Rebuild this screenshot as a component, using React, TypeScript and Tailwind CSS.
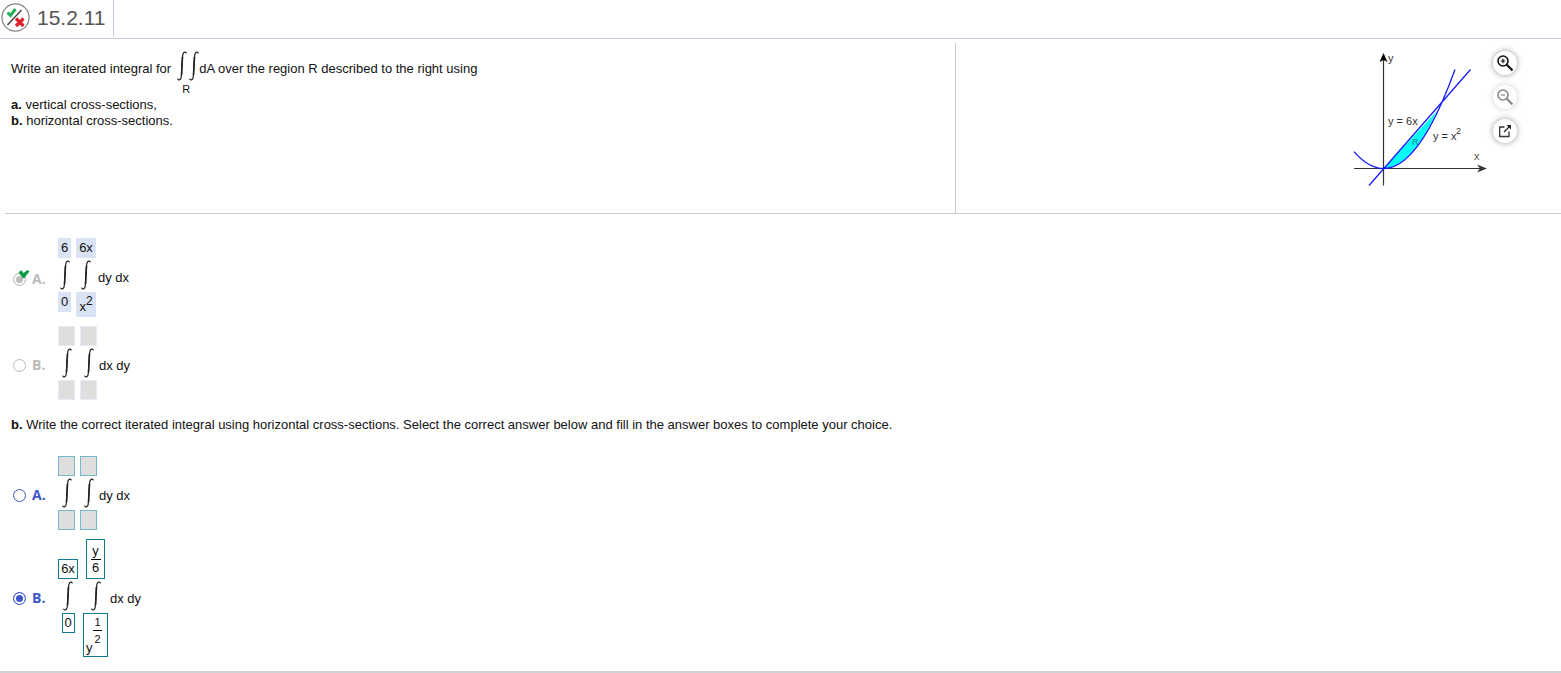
import { useState, type ReactNode } from "react";
import { clsx } from "clsx";

function Integral() {
  return (
    <svg width="10" height="30" viewBox="0 0 10 30" aria-hidden="true">
      <path
        d="M9.2 1.9C8.6 0.6 6.7 0.6 6 3C5.2 6 5.2 10 4.9 15C4.7 20 4.7 24 4 27C3.3 29.4 1.4 29.4 0.8 28.1"
        fill="none"
        stroke="#222"
        strokeWidth="1.2"
        strokeLinecap="round"
      />
      <path d="M5.5 6L4.5 24" stroke="#222" strokeWidth="1.6" />
    </svg>
  );
}

type Tone = "graded" | "locked" | "empty" | "filled";

const tones: Record<Tone, string> = {
  graded: "border-[#dae3f3] bg-[#dae3f3]",
  locked: "border-[#e6ebf7] bg-[#dedede]",
  empty: "border-[#76b8c9] bg-[#dedede]",
  filled: "border-[#0d7a93] bg-white",
};

interface BoxProps {
  label: string;
  tone: Tone;
  value?: string;
  wide?: boolean;
}

function AnswerBox({ label, tone, value = "", wide }: BoxProps) {
  const width = value === "" ? "w-[17px]" : wide ? "w-5" : "w-[13px]";
  return (
    <input
      type="text"
      aria-label={label}
      defaultValue={value}
      readOnly={tone === "graded" || tone === "locked"}
      className={clsx("h-5 border p-0 pb-[2px] text-center outline-none", width, tones[tone])}
    />
  );
}

interface MathBoxProps {
  label: string;
  tone: Tone;
  className: string;
  children: ReactNode;
}

function MathBox({ label, tone, className, children }: MathBoxProps) {
  return (
    <button type="button" aria-label={label} className={clsx("border", tones[tone], className)}>
      {children}
    </button>
  );
}

interface ChoiceProps {
  name: string;
  letter: string;
  differential: string;
  checked: boolean;
  disabled?: boolean;
  correct?: boolean;
  onSelect?: () => void;
  limits: [ReactNode, ReactNode, ReactNode, ReactNode];
}

function Choice({ name, letter, differential, checked, disabled, correct, onSelect, limits }: ChoiceProps) {
  const [outerTop, outerBottom, innerTop, innerBottom] = limits;
  return (
    <div className="grid w-max grid-cols-[45px_auto_auto_auto] grid-rows-[auto_34px_auto] gap-x-[5px] pl-[3px]">
      <label
        className={clsx(
          "row-start-2 flex items-center gap-[6px] pl-[5px] font-['Open_Sans',sans-serif] text-sm font-bold",
          disabled ? "text-[#bbb]" : "text-[#3d57c9]",
          correct ? "pt-2" : "pt-1"
        )}
      >
        <span className="relative flex">
          <input
            type="radio"
            name={name}
            checked={checked}
            disabled={disabled}
            onChange={onSelect}
            className="size-[13px] appearance-none rounded-full border border-current bg-white checked:bg-current checked:shadow-[inset_0_0_0_2px_white]"
          />
          {correct && (
            <svg className="absolute -top-1 left-[5px]" width="12" height="11" viewBox="0 0 12 11" role="img" aria-label="Correct">
              <path d="M0.5 3.2L3.5 1.2L5.5 4L9.5 1L11.5 2.2L6.2 9.2L4.8 9.2Z" fill="#0a9b46" />
            </svg>
          )}
        </span>
        {letter}.
      </label>
      <div className="col-start-2 row-start-1 flex self-end justify-self-center">{outerTop}</div>
      <div className="col-start-2 row-start-2 self-center justify-self-center"><Integral /></div>
      <div className="col-start-2 row-start-3 flex self-start justify-self-center">{outerBottom}</div>
      <div className="col-start-3 row-start-1 flex self-end justify-self-center">{innerTop}</div>
      <div className="col-start-3 row-start-2 self-center justify-self-center"><Integral /></div>
      <div className="col-start-3 row-start-3 flex self-start justify-self-center">{innerBottom}</div>
      <span className="col-start-4 row-start-2 -ml-[3px] self-center pt-[6px]">{differential}</span>
    </div>
  );
}

function emptyLimits(tone: Tone, part: string): [ReactNode, ReactNode, ReactNode, ReactNode] {
  return [
    <AnswerBox label={`${part} outer upper limit`} tone={tone} />,
    <AnswerBox label={`${part} outer lower limit`} tone={tone} />,
    <AnswerBox label={`${part} inner upper limit`} tone={tone} />,
    <AnswerBox label={`${part} inner lower limit`} tone={tone} />,
  ];
}

function RegionGraph() {
  return (
    <svg width="140" height="140" viewBox="0 0 140 140" role="img" aria-label="Region R between y = 6x and y = x squared">
      <path d="M33.5 118.5L87 61Q61 117 33.5 118.5Z" fill="#00ffff" />
      <path d="M33.5 7V135.5M4 118.5H132" stroke="#333" strokeWidth="1.2" fill="none" />
      <path d="M33.5 3L37.5 12L33.5 10L29.5 12Z" fill="#000" />
      <path d="M137 118.5L127 114.5L130 118.5L127 122.5Z" fill="#333" />
      <path d="M4 101.6Q54.5 159.4 105 19.5M19 135.5L120.5 19.5" stroke="#1a1aff" strokeWidth="1.3" fill="none" />
      <g fill="#333" fontSize="11">
        <text x="38" y="12">y</text>
        <text x="124" y="110" fill="#555">x</text>
        <text x="38" y="75">y = 6x</text>
        <text x="83" y="90">y = x</text>
        <text x="106" y="84" fontSize="9">2</text>
        <text x="62" y="95" fontSize="9" fill="#067a7a">R</text>
      </g>
    </svg>
  );
}

function GraphTools() {
  const button = "flex size-6 items-center justify-center rounded-full bg-white shadow-[0_0_6px_rgba(0,0,0,0.4)]";
  return (
    <div className="flex flex-col gap-[10px] pt-px">
      <button type="button" aria-label="Zoom in" className={button}>
        <svg width="18" height="18" viewBox="0 0 18 18" fill="none" stroke="#111">
          <circle cx="7" cy="7" r="5" strokeWidth="1.6" />
          <path d="M4.8 7H9.2M7 4.8V9.2" strokeWidth="1.2" />
          <path d="M10.8 10.8L16.5 16.5" strokeWidth="2.2" />
        </svg>
      </button>
      <button type="button" aria-label="Zoom out" disabled className="flex size-6 items-center justify-center rounded-full bg-white shadow-[0_0_6px_rgba(0,0,0,0.2)]">
        <svg width="18" height="18" viewBox="0 0 18 18" fill="none" stroke="#888">
          <circle cx="7" cy="7" r="5" strokeWidth="1.6" />
          <path d="M4.8 7H9.2" strokeWidth="1.2" />
          <path d="M10.8 10.8L16.5 16.5" strokeWidth="2.2" />
        </svg>
      </button>
      <button type="button" aria-label="Open in new window" className={button}>
        <svg width="14" height="14" viewBox="0 0 14 14" fill="none" stroke="#333">
          <path d="M6.5 3H1.7V12.5H11V7.5" strokeWidth="1.3" />
          <path d="M6 8L11.5 2.5" strokeWidth="1.4" />
          <path d="M8.5 1H13V5.5Z" fill="#222" stroke="none" />
        </svg>
      </button>
    </div>
  );
}

function Header() {
  return (
    <header className="flex h-[39px] items-start border-b border-[#c5cbdb]">
      <div className="flex h-[37px] items-center gap-[7px] border-r border-[#c5cbdb] pb-[2px] pl-px pr-[7px]">
        <svg width="29" height="29" viewBox="0 0 29 29" role="img" aria-label="Partially correct">
          <circle cx="14.5" cy="14.5" r="13.6" fill="#fff" stroke="#888" strokeWidth="1.3" />
          <path d="M6.5 22L20.5 7" stroke="#444" strokeWidth="1.4" />
          <path d="M6.5 9.5L9.5 12.5L14.5 6" stroke="#23b25b" strokeWidth="3" fill="none" />
          <path d="M15 15.5L22.5 23M22.5 15.5L15 23" stroke="#df2029" strokeWidth="3.2" />
        </svg>
        <h1 className="text-[21px] leading-7 text-[#555]">15.2.11</h1>
      </div>
    </header>
  );
}

export default function App() {
  const [partB, setPartB] = useState("B");

  return (
    <div className="bg-white font-['Liberation_Sans',Arial,sans-serif] text-[13px] leading-4 text-[#111]">
      <Header />

      <section className="ml-[5px] mt-1 flex h-[171px] border-b border-[#ccc]">
        <div className="w-[61.1%] border-r border-[#ccc] pl-[6px] pt-2">
          <div className="flex items-start">
            <p className="mt-[10px]">Write an iterated integral for</p>
            <div className="ml-[6px] flex flex-col">
              <div className="flex gap-[2px]">
                <Integral />
                <Integral />
              </div>
              <span className="pl-[5px] text-[11px] leading-4">R</span>
            </div>
            <p className="mt-[10px]">dA over the region R described to the right using</p>
          </div>
          <p><b>a.</b> vertical cross-sections,</p>
          <p><b>b.</b> horizontal cross-sections.</p>
        </div>
        <div className="flex flex-1 justify-end gap-[3px] pr-11 pt-[7px]">
          <RegionGraph />
          <GraphTools />
        </div>
      </section>

      <main className="border-b-2 border-[#ced1d6] pb-[14px] pl-[5px] pt-6">
        <div className="flex flex-col gap-[9px]">
          <Choice
            name="part-a"
            letter="A"
            differential="dy dx"
            checked
            disabled
            correct
            limits={[
              <AnswerBox label="Outer upper limit" tone="graded" value="6" />,
              <AnswerBox label="Outer lower limit" tone="graded" value="0" />,
              <AnswerBox label="Inner upper limit" tone="graded" value="6x" wide />,
              <MathBox label="Inner lower limit, x squared" tone="graded" className="flex h-[25px] w-5 items-end justify-center pb-px">
                x<sup className="top-0 self-start text-[12px] leading-4">2</sup>
              </MathBox>,
            ]}
          />
          <Choice
            name="part-a"
            letter="B"
            differential="dx dy"
            checked={false}
            disabled
            limits={emptyLimits("locked", "Part a")}
          />
        </div>

        <p className="mb-[23px] mt-[17px] pl-[6px]">
          <b>b.</b> Write the correct iterated integral using horizontal cross-sections. Select the correct answer below and fill in the answer boxes to complete your choice.
        </p>

        <div className="flex flex-col gap-[9px]">
          <Choice
            name="part-b"
            letter="A"
            differential="dy dx"
            checked={partB === "A"}
            onSelect={() => setPartB("A")}
            limits={emptyLimits("empty", "Part b")}
          />
          <Choice
            name="part-b"
            letter="B"
            differential="dx dy"
            checked={partB === "B"}
            onSelect={() => setPartB("B")}
            limits={[
              <AnswerBox label="Outer upper limit" tone="filled" value="6x" wide />,
              <AnswerBox label="Outer lower limit" tone="filled" value="0" />,
              <MathBox label="Inner upper limit, y over 6" tone="filled" className="flex h-10 w-[19px] flex-col items-center justify-center">
                <span className="w-[10px] border-b border-black">y</span>
                <span>6</span>
              </MathBox>,
              <MathBox label="Inner lower limit, y to the one half" tone="filled" className="flex h-11 w-[25px] items-end justify-between pl-[2px] pr-[5px]">
                <span>y</span>
                <span className="flex flex-col self-start text-[11px]">
                  <span className="w-[9px] border-b border-black">1</span>
                  <span>2</span>
                </span>
              </MathBox>,
            ]}
          />
        </div>
      </main>
    </div>
  );
}
